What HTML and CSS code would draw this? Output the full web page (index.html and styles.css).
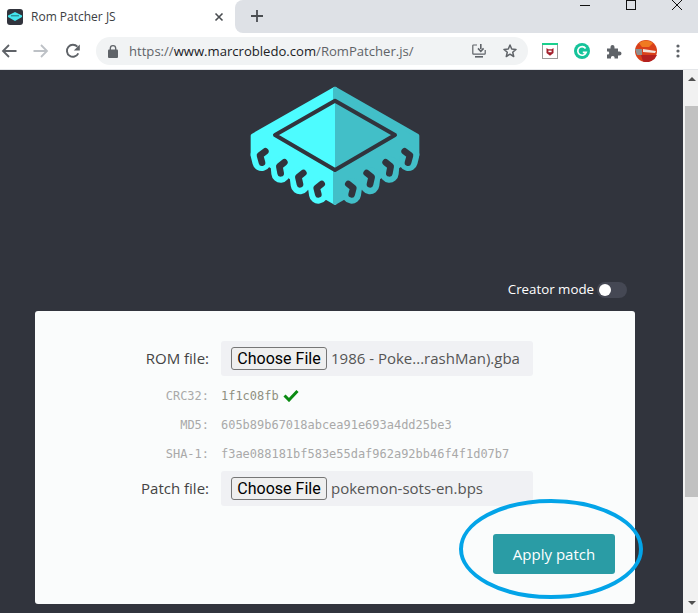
FILE: index.html
```html
<!DOCTYPE html>
<html>
<head>
    <title>Rom Patcher JS</title>
    <link rel="stylesheet" href="styles.css">
</head>
<body>
    <div class="tabstrip">
        <div class="tab">
            <span class="favicon">
                <svg width="14" height="9" viewBox="0 0 14 9"><path d="M7 0 14 3.500V5L7 9 0 5V3.500Z" fill="#45e6ee"/><path d="M3 3.800H11" stroke="#1f6f78" stroke-width="1"/></svg>
            </span>
            <span class="tab-title">Rom Patcher JS</span>
            <svg class="tab-close" width="10" height="10" viewBox="0 0 10 10"><path d="M1.500 1.500 8.500 8.500M8.500 1.500 1.500 8.500" stroke="#4a4d51" stroke-width="1.600"/></svg>
        </div>
        <div class="tabstrip-rest">
            <svg class="new-tab" width="14" height="14" viewBox="0 0 14 14"><path d="M7 1V13M1 7H13" stroke="#4a4d51" stroke-width="1.800"/></svg>
            <div class="window-controls">
                <svg width="10" height="10" viewBox="0 0 10 10"><path d="M0 5.500H10" stroke="#111" stroke-width="1"/></svg>
                <svg width="10" height="10" viewBox="0 0 10 10"><rect x="0.500" y="0.500" width="9" height="9" fill="none" stroke="#111"/></svg>
                <svg width="10" height="10" viewBox="0 0 10 10"><path d="M0 0 10 10M10 0 0 10" stroke="#111" stroke-width="1"/></svg>
            </div>
        </div>
    </div>

    <div class="toolbar">
        <svg class="nav-icon" width="16" height="16" viewBox="0 0 16 16"><path d="M15.500 8H2M8 2 2 8l6 6" fill="none" stroke="#5f6368" stroke-width="1.800"/></svg>
        <svg class="nav-icon" width="16" height="16" viewBox="0 0 16 16"><path d="M.5 8H14M8 2l6 6-6 6" fill="none" stroke="#bdc1c6" stroke-width="1.800"/></svg>
        <svg class="nav-icon" width="16" height="16" viewBox="0 0 16 16"><path d="M13.300 10.400A6 6 0 1 1 12.400 3.700" fill="none" stroke="#5f6368" stroke-width="1.900"/><path d="M14.800 1.400V7.400H8.800Z" fill="#5f6368"/></svg>
        <div class="omnibox">
            <svg width="10" height="13" viewBox="0 0 10 13"><path d="M2.300 5V3.400a2.700 2.700 0 0 1 5.400 0V5" fill="none" stroke="#5f6368" stroke-width="1.300"/><rect y="4.600" width="10" height="8.400" rx="1" fill="#5f6368"/></svg>
            <span class="url"><span class="url-dim">https://</span>www.marcrobledo.com<span class="url-dim">/RomPatcher.js/</span></span>
            <svg class="omni-install" width="14" height="14" viewBox="0 0 14 14"><path d="M5 1H1.500A.7.7 0 0 0 .8 1.700V9.500A.7.7 0 0 0 1.500 10.200H12.500A.7.7 0 0 0 13.200 9.500V6" fill="none" stroke="#5f6368" stroke-width="1.200"/><path d="M8.800 0V5M6 4.400 8.800 7.400 11.600 4.400" fill="none" stroke="#5f6368" stroke-width="1.600"/><path d="M3 12.800H11" stroke="#5f6368" stroke-width="1.600"/></svg>
            <svg class="omni-star" width="16" height="16" viewBox="0 0 16 16"><path d="M8 2 9.700 6 14 6.400 10.700 9.200 11.700 13.500 8 11.200 4.300 13.500 5.300 9.200 2 6.400 6.300 6Z" fill="none" stroke="#5f6368" stroke-width="1.500" stroke-linejoin="round"/></svg>
        </div>
        <div class="extensions">
            <svg width="16" height="16" viewBox="0 0 16 16"><rect x=".5" y=".5" width="15" height="15" fill="#fff" stroke="#9a9a9a"/><rect width="16" height="2" fill="#1bcf8d"/><path d="M4.500 5 6.300 6.200H9.700L11.500 5V10L8 12.800 4.500 10Z" fill="#a3202d"/><rect x="6.400" y="7.600" width="3.200" height="1.600" fill="#fff"/></svg>
            <svg width="16" height="16" viewBox="0 0 16 16"><circle cx="8" cy="8" r="8" fill="#15c39a"/><path d="M11.600 5.400A4.300 4.300 0 1 0 12.200 9.300H8.800" fill="none" stroke="#fff" stroke-width="1.700"/></svg>
            <svg width="16" height="16" viewBox="0 0 16 16"><path d="M1 5.500H4.500V4A2 2 0 0 1 8.500 4V5.500H12V8.500H13.500A2 2 0 0 1 13.500 12.500H12V15.500H8.500V14A2 2 0 0 0 5 14V15.500H1V11.500H2.500A2 2 0 0 0 2.500 8.500H1Z" fill="#5f6368"/></svg>
            <span class="avatar">
                <svg width="22" height="22" viewBox="0 0 22 22"><circle cx="11" cy="11" r="11" fill="#d9401a"/><path d="M4 3A11 11 0 0 1 18 3L14 7H7Z" fill="#ef7a22"/><path d="M0 9H7V15H2Z" fill="#8f8f8f"/><path d="M8 9 21 11 20 13 8 12Z" fill="#f3e6dc"/><path d="M6 15H22A11 11 0 0 1 8 21.500Z" fill="#b3201f"/></svg>
            </span>
            <svg class="menu-dots" width="4" height="14" viewBox="0 0 4 14"><circle cx="2" cy="2" r="1.600" fill="#5f6368"/><circle cx="2" cy="7" r="1.600" fill="#5f6368"/><circle cx="2" cy="12" r="1.600" fill="#5f6368"/></svg>
        </div>
    </div>

    <div class="viewport">
        <div class="page">
            <div class="wrapper">
                <div class="logo">
                    <svg width="190" height="130" viewBox="0 0 570 390">
                        <defs>
                            <g id="logoSide">
                                <path d="M285 26 38 167V226L285 368Z" stroke-width="12" stroke-linejoin="round"/>
                                <g fill="none" stroke-width="56" stroke-linecap="round" stroke-linejoin="round">
                                    <path d="M60 225 65 245"/>
                                    <path d="M120 258 122 280"/>
                                    <path d="M177 290 180 315"/>
                                    <path d="M232 322 235 343"/>
                                </g>
                                <g fill="none" stroke="#31343d" stroke-width="20" stroke-linecap="round" stroke-linejoin="round">
                                    <path d="M76 214 60 226 66 248"/>
                                    <path d="M133 247 118 259 122 280"/>
                                    <path d="M190 279 175 291 180 313"/>
                                    <path d="M245 312 230 324 235 343"/>
                                </g>
                            </g>
                        </defs>
                        <use href="#logoSide" fill="#4dfcff" stroke="#4dfcff"/>
                        <use href="#logoSide" fill="#42bfc8" stroke="#42bfc8" transform="translate(570 0) scale(-1 1)"/>
                        <path d="M285 62 105 165 285 270Z" fill="#4dfcff"/>
                        <path d="M285 62 465 165 285 270Z" fill="#42bfc8"/>
                        <path d="M285 62 105 165 285 270 465 165Z" fill="none" stroke="#31343d" stroke-width="12" stroke-linejoin="round"/>
                    </svg>
                </div>

                <div class="creator-row">
                    <span class="creator-text">Creator mode</span>
                    <span class="switch"><span class="switch-knob"></span></span>
                </div>

                <div class="card">
                    <div class="file-row">
                        <label class="file-label">ROM file:</label>
                        <div class="file-box">
                            <button class="file-button">Choose File</button>
                            <span class="file-name">1986 - Poke...rashMan).gba</span>
                        </div>
                    </div>
                    <div class="hash-row hash-first">
                        <span class="hash-label">CRC32:</span>
                        <span class="hash-value crc">1f1c08fb</span>
                        <svg class="check" width="16" height="13" viewBox="0 0 16 13"><path d="M1.500 6.500 6 11 14.500 2" fill="none" stroke="#0a8a12" stroke-width="3"/></svg>
                    </div>
                    <div class="hash-row">
                        <span class="hash-label">MD5:</span>
                        <span class="hash-value">605b89b67018abcea91e693a4dd25be3</span>
                    </div>
                    <div class="hash-row">
                        <span class="hash-label">SHA-1:</span>
                        <span class="hash-value">f3ae088181bf583e55daf962a92bb46f4f1d07b7</span>
                    </div>
                    <div class="file-row patch-row">
                        <label class="file-label">Patch file:</label>
                        <div class="file-box">
                            <button class="file-button">Choose File</button>
                            <span class="file-name">pokemon-sots-en.bps</span>
                        </div>
                    </div>
                    <div class="actions">
                        <button class="apply-button">Apply patch</button>
                    </div>
                    <!-- hand drawn circle on top of the card -->
                    <svg class="highlight" width="186" height="104" viewBox="0 0 186 104"><ellipse cx="93" cy="52" rx="90" ry="48" fill="none" stroke="#03a4e8" stroke-width="4"/></svg>
                </div>
            </div>
        </div>
        <div class="scrollbar">
            <span class="arrow-up"></span>
            <span class="thumb"></span>
            <span class="arrow-down"></span>
        </div>
    </div>
</body>
</html>
```

FILE: styles.css
```css
html, body {
    margin: 0;
    height: 100%;
    overflow: hidden;
}

body {
    display: flex;
    flex-direction: column;
    font-family: "Open Sans", sans-serif;
    background: #fff;
}

.tabstrip {
    display: flex;
    height: 33px;
    flex: none;
    background: #fff;
}

.tab {
    display: flex;
    align-items: center;
    width: 235px;
    box-sizing: border-box;
    padding-left: 7px;
}

.tabstrip-rest {
    display: flex;
    align-items: flex-start;
    flex: 1;
    border-radius: 8px 0 0 8px;
    background: #dee1e6;
}

.favicon {
    display: flex;
    align-items: center;
    justify-content: center;
    width: 16px;
    height: 16px;
    border-radius: 3px;
    background: #31343d;
}

.tab-title {
    margin-left: 8px;
    font-size: 12px;
    color: #3c4043;
}

.tab-close {
    margin-left: auto;
    margin-right: 11px;
}

.new-tab {
    margin: 9px 0 0 15px;
}

.window-controls {
    display: flex;
    gap: 36px;
    margin-left: auto;
    padding-right: 16px;
}

.toolbar {
    display: flex;
    align-items: center;
    height: 36px;
    flex: none;
    background: #fff;
    border-bottom: 1px solid #e4e6e9;
}

.nav-icon {
    margin-left: 1px;
    margin-right: 15px;
}

.omnibox {
    display: flex;
    align-items: center;
    width: 432px;
    height: 28px;
    box-sizing: border-box;
    padding-left: 12px;
    border-radius: 14px;
    background: #f1f3f4;
}

.url {
    margin-left: 11px;
    font-size: 13.100px;
    color: #202124;
}

.url-dim {
    color: #5f6368;
}

.omni-install {
    margin-left: auto;
    margin-right: 16px;
}

.omni-star {
    margin-right: 10px;
}

.extensions {
    display: flex;
    align-items: center;
    margin-left: 14px;
}

.extensions svg {
    margin-right: 16px;
}

.avatar {
    display: flex;
    margin-left: -3px;
}

.avatar svg {
    margin-right: 19px;
}

.extensions .menu-dots {
    margin-right: 0;
}

.viewport {
    display: flex;
    flex: 1;
    min-height: 0;
}

.page {
    flex: 1;
    padding-top: 10px;
    background: #31343d;
}

.wrapper {
    width: 600px;
    margin-left: 35px;
}

.logo {
    display: flex;
    justify-content: center;
    margin-bottom: 72px;
}

.creator-row {
    display: flex;
    justify-content: flex-end;
    align-items: center;
    gap: 3px;
    height: 16px;
    margin-bottom: 13px;
    padding-right: 8px;
    font-size: 13.300px;
    color: #fff;
}

.creator-text {
    margin-top: -2px;
}

.switch {
    display: flex;
    align-items: center;
    width: 30px;
    height: 16px;
    border-radius: 8px;
    background: #454854;
}

.switch-knob {
    width: 12px;
    height: 12px;
    margin-left: 2px;
    border-radius: 50%;
    background: #fff;
}

.card {
    position: relative;
    height: 293px;
    box-sizing: border-box;
    padding-top: 30px;
    border-radius: 3px;
    background: #fafcfc;
}

.file-row {
    display: flex;
    align-items: center;
    gap: 12px;
}

.patch-row {
    margin-top: 3px;
}

.file-label {
    width: 174px;
    padding-bottom: 2px;
    text-align: right;
    font-size: 15px;
    color: #444;
}

.file-box {
    display: flex;
    align-items: center;
    gap: 4px;
    width: 312px;
    height: 35px;
    box-sizing: border-box;
    padding-left: 10px;
    border-radius: 3px;
    background: #f0f1f4;
    font-size: 15px;
    color: #555;
}

.file-name {
    padding-bottom: 2px;
}

.file-button {
    width: 96px;
    height: 23px;
    padding: 0;
    border: 1px solid #767676;
    border-radius: 3px;
    background: #efefef;
    font-family: Roboto, sans-serif;
    font-size: 16px;
    color: #000;
}

.hash-row {
    display: flex;
    align-items: center;
    gap: 12px;
    height: 29px;
    font-family: "DejaVu Sans Mono", monospace;
    font-size: 11.970px;
    color: #a9a9a9;
}

.hash-first {
    margin-top: 5px;
}

.hash-label {
    width: 174px;
    text-align: right;
}

.crc {
    color: #8f8f80;
}

.check {
    margin-left: -8px;
}

.actions {
    display: flex;
    justify-content: flex-end;
    margin-top: 28px;
    padding-right: 20px;
}

.apply-button {
    width: 122px;
    height: 40px;
    padding: 0;
    border: 0;
    border-radius: 3px;
    background: #2a9ca5;
    font-family: "Open Sans", sans-serif;
    font-size: 15px;
    color: #fff;
}

.highlight {
    position: absolute;
    left: 423px;
    top: 186px;
}

.scrollbar {
    display: flex;
    flex-direction: column;
    align-items: center;
    width: 15px;
    box-sizing: border-box;
    padding-left: 2px;
    flex: none;
    background: #f1f1f1;
}

.arrow-up, .arrow-down {
    width: 0;
    height: 0;
    border-left: 4px solid transparent;
    border-right: 4px solid transparent;
}

.arrow-up {
    margin-top: 7px;
    border-bottom: 4px solid #505050;
}

.thumb {
    width: 13px;
    height: 391px;
    margin-top: 25px;
    background: #c1c1c1;
}

.arrow-down {
    margin-top: auto;
    margin-bottom: 8px;
    border-top: 4px solid #505050;
}
```
